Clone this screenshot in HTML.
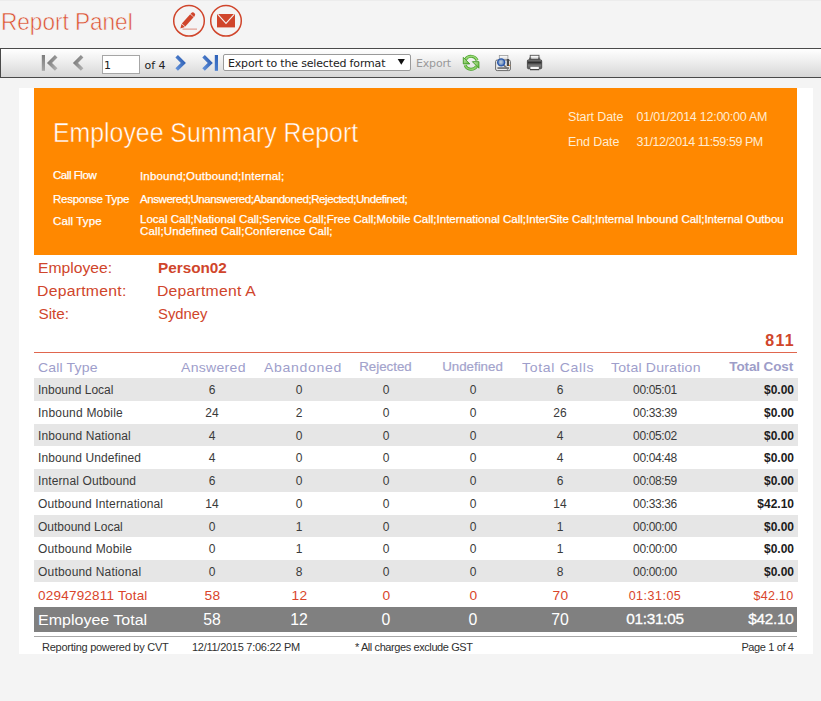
<!DOCTYPE html>
<html><head><meta charset="utf-8"><title>Report Panel</title>
<style>
html,body{margin:0;padding:0;}
body{width:821px;height:701px;background:#f4f4f4;position:relative;overflow:hidden;font-family:"Liberation Sans",sans-serif;}
.a{position:absolute;white-space:nowrap;}
#title{left:1px;top:5.6px;font-size:24px;line-height:32px;color:#dc4e2d;-webkit-text-stroke:0.6px #f4f4f4;transform:scaleX(0.94);transform-origin:0 0;}
#tb{left:0;top:48px;width:840px;height:28px;border:1px solid #4a4a4a;background:linear-gradient(#ffffff,#f0f0f0 40%,#d7d7d7);}
.dv{font-family:"DejaVu Sans","Liberation Sans",sans-serif;font-size:11px;line-height:14px;color:#222;}
#paper{left:19px;top:88px;width:794px;height:566px;background:#fff;}
#org{left:34px;top:88px;width:763px;height:167px;background:#ff8800;}
.w{color:#fff;}
.row{left:34px;width:764px;background:#e6e6e6;}
.c{text-align:center;width:87px;}
.r{text-align:right;}
.t12{font-size:12px;line-height:14px;color:#3a3a3a;}
.t12.b{color:#1c1c1c;}
.red{color:#d9452b;}
.hd{color:#9e9ecb;font-size:13px;line-height:14px;}
.sx{transform:scaleX(1.08);transform-origin:0 0;}
.b{font-weight:bold;}
.ar{font-size:13.3px;-webkit-text-stroke:0.2px #a3a3cc;color:#a3a3cc}
.emp{font-size:15.3px;line-height:18px;color:#d0452b;}
.p{font-size:11.5px;line-height:13px;color:#fff;-webkit-text-stroke:0.25px #fff;}
.sd{font-size:12.5px;line-height:15px;color:#ffecd2;}
.tot{font-size:12.5px;line-height:14px;color:#d9452b;letter-spacing:0.5px;}
.et{font-size:15px;line-height:18px;color:#fff;}
.ft{font-size:11px;line-height:13px;color:#303030;}
.en{font-size:15.8px;}
.sb{-webkit-text-stroke:0.3px #fff;font-size:15.3px;letter-spacing:-0.25px}
</style></head><body>
<div class="a" style="left:0;top:0;width:821px;height:1px;background:#ececec"></div>
<div class="a" id="title">Report Panel</div>
<svg class="a" style="left:170px;top:2px" width="76" height="38" viewBox="170 2 76 38">
 <circle cx="189" cy="20.8" r="15.3" fill="none" stroke="#d0452b" stroke-width="1.5"/>
 <circle cx="226" cy="20.8" r="15.3" fill="none" stroke="#d0452b" stroke-width="1.5"/>
 <rect x="217" y="14" width="18" height="13.4" fill="#d0452b"/>
 <path d="M217.6 14.2 L226 23.4 L234.4 14.2" fill="none" stroke="#f4f4f4" stroke-width="1.1"/>
 <g transform="translate(187.2 21.0) rotate(42)" fill="#d0452b">
  <path d="M-2.3 -7.6 L-2.3 -8.4 A2.3 2.3 0 0 1 2.3 -8.4 L2.3 -7.6 Z"/>
  <rect x="-2.3" y="-7" width="4.6" height="12.4"/>
  <path d="M-2.3 6 L2.3 6 L0 10.2 Z"/>
 </g>
 <rect x="182.5" y="28.6" width="14.5" height="1" fill="#d0452b" opacity=".6"/>
</svg>
<div class="a" id="tb"></div>
<svg class="a" style="left:38px;top:52px" width="184" height="22" viewBox="38 52 184 22">
 <defs><linearGradient id="g1" x1="0" y1="0" x2="1" y2="1"><stop offset="0" stop-color="#787878"/><stop offset="1" stop-color="#b0b0b0"/></linearGradient>
 <linearGradient id="g2" x1="1" y1="0" x2="0" y2="1"><stop offset="0" stop-color="#2a5cb2"/><stop offset="1" stop-color="#6392da"/></linearGradient>
 <linearGradient id="g3" x1="0" y1="0" x2="0" y2="1"><stop offset="0" stop-color="#7c7c7c"/><stop offset="1" stop-color="#a6a6a6"/></linearGradient>
 <linearGradient id="g4" x1="0" y1="0" x2="0" y2="1"><stop offset="0" stop-color="#2f62b8"/><stop offset="1" stop-color="#4a7ecf"/></linearGradient></defs>
 <rect x="41.8" y="55" width="3.2" height="15.8" fill="url(#g3)"/>
 <path d="M56.2 56.2 L49.5 62.9 L56.2 69.6" fill="none" stroke="url(#g1)" stroke-width="3.6"/>
 <path d="M82.15 56.2 L75.45 62.9 L82.15 69.6" fill="none" stroke="url(#g1)" stroke-width="3.6"/>
 <path d="M176.65 56.2 L183.35 62.9 L176.65 69.6" fill="none" stroke="url(#g2)" stroke-width="3.6"/>
 <path d="M203.55 56.2 L210.25 62.9 L203.55 69.6" fill="none" stroke="url(#g2)" stroke-width="3.6"/>
 <rect x="214.8" y="55" width="3.2" height="15.8" fill="url(#g4)"/>
</svg>
<div class="a dv" style="left:102px;top:55px;width:36px;height:17px;border:1px solid #a6a6a6;background:#fff;line-height:20px;text-indent:1px">1</div>
<div class="a dv" style="left:144.5px;top:59px">of 4</div>
<div class="a dv" style="left:223px;top:54px;width:186px;height:15px;border:1px solid #9a9a9a;border-radius:2px;background:#fff;line-height:17px;text-indent:4px;letter-spacing:-0.17px">Export to the selected format</div>
<svg class="a" style="left:397px;top:58px" width="9" height="8" viewBox="0 0 9 8"><path d="M0.7 1 L7.9 1 L4.3 6.8 Z" fill="#111"/></svg>
<div class="a dv" style="left:416px;top:57px;color:#999;letter-spacing:-0.17px">Export</div>
<svg class="a" style="left:460px;top:52px" width="86" height="22" viewBox="460 52 86 22">
 <defs>
  <linearGradient id="gr" x1="0" y1="0" x2="1" y2="1"><stop offset="0" stop-color="#c9eeb0"/><stop offset="1" stop-color="#5bb232"/></linearGradient>
  <linearGradient id="pb" x1="0" y1="0" x2="0" y2="1"><stop offset="0" stop-color="#9a9a9a"/><stop offset=".28" stop-color="#2c2c2c"/><stop offset=".6" stop-color="#7a7a7a"/><stop offset="1" stop-color="#565656"/></linearGradient>
  <linearGradient id="pp" x1="0" y1="0" x2="0" y2="1"><stop offset="0" stop-color="#ffffff"/><stop offset="1" stop-color="#c4c4c4"/></linearGradient>
  <radialGradient id="ln" cx=".45" cy=".45" r=".6"><stop offset="0" stop-color="#c5d0dc"/><stop offset=".55" stop-color="#7f9cc4"/><stop offset="1" stop-color="#2a58ac"/></radialGradient>
 </defs>
 <path d="M465.59 59.36 A6.5 6.5 0 0 1 477.13 60.37" fill="none" stroke="#48a22a" stroke-width="2.9"/>
 <path d="M465.59 59.36 A6.5 6.5 0 0 1 477.13 60.37" fill="none" stroke="#9ad877" stroke-width="1.5"/>
 <path d="M463.3 57.4 L463.3 63.9 L469.8 63.9 Z" fill="url(#gr)" stroke="#3d9620" stroke-width="0.9" stroke-linejoin="round"/>
 <path d="M476.61 66.24 A6.5 6.5 0 0 1 465.07 65.23" fill="none" stroke="#48a22a" stroke-width="2.9"/>
 <path d="M476.61 66.24 A6.5 6.5 0 0 1 465.07 65.23" fill="none" stroke="#8fd16b" stroke-width="1.5"/>
 <path d="M478.9 68.2 L478.9 61.7 L472.4 61.7 Z" fill="url(#gr)" stroke="#3d9620" stroke-width="0.9" stroke-linejoin="round"/>
 <rect x="499.3" y="55.4" width="8.6" height="6" fill="url(#pp)" stroke="#9a9a9a" stroke-width="0.8"/>
 <rect x="495.6" y="60" width="14.8" height="10.6" rx="1.6" fill="#ececec" stroke="#6a6a6a" stroke-width="1"/>
 <rect x="506.8" y="59" width="2.2" height="7" fill="#4a4a4a"/>
 <rect x="497.4" y="67.4" width="11.6" height="1.3" fill="#4a4a4a"/>
 <rect x="509" y="64.8" width="1.2" height="1.2" fill="#f08a1c"/>
 <path d="M504 65.4 L507.6 68.8" stroke="#777" stroke-width="1.8" stroke-linecap="round"/>
 <circle cx="501.2" cy="62.4" r="3.5" fill="url(#ln)" stroke="#2a58ac" stroke-width="1.4"/>
 <rect x="530.2" y="55.3" width="8.8" height="4.6" fill="url(#pp)" stroke="#555" stroke-width="0.9"/>
 <rect x="529" y="57.6" width="11.2" height="2.2" fill="#5a5a5a" opacity=".85"/>
 <rect x="531.2" y="56.2" width="6.8" height="2.6" fill="url(#pp)"/>
 <rect x="527.4" y="59.8" width="14.3" height="9" rx="1.2" fill="url(#pb)" stroke="#3a3a3a" stroke-width="0.8"/>
 <rect x="530.4" y="66.8" width="8.4" height="2.8" fill="#fafafa"/>
 <rect x="530" y="69.2" width="9.2" height="1" fill="#222"/>
</svg>
<div class="a" id="paper"></div>
<div class="a" id="org"></div>
<div class="a w" id="h1" style="left:52.5px;top:117px;font-size:27px;line-height:32px;-webkit-text-stroke:0.5px #ff8800;transform:scaleX(0.92);transform-origin:0 0">Employee Summary Report</div>
<div class="a sd" style="left:568px;top:110px;letter-spacing:-0.1px">Start Date</div>
<div class="a sd" style="left:636.5px;top:110px;letter-spacing:-0.25px">01/01/2014 12:00:00 AM</div>
<div class="a sd" style="left:568px;top:135px;letter-spacing:-0.1px">End Date</div>
<div class="a sd" style="left:636.5px;top:135px;letter-spacing:-0.44px">31/12/2014 11:59:59 PM</div>
<div class="a p" style="left:53px;top:169.4px;letter-spacing:-0.45px">Call Flow</div>
<div class="a p" style="left:140px;top:169.6px;letter-spacing:0.17px">Inbound;Outbound;Internal;</div>
<div class="a p" style="left:53px;top:193px;letter-spacing:-0.27px">Response Type</div>
<div class="a p" style="left:140px;top:193px;letter-spacing:-0.43px">Answered;Unanswered;Abandoned;Rejected;Undefined;</div>
<div class="a p" style="left:53px;top:215px;letter-spacing:0.1px">Call Type</div>
<div class="a p" style="left:140px;top:212.6px;width:643px;overflow:hidden">Local Call;National Call;Service Call;Free Call;Mobile Call;International Call;InterSite Call;Internal Inbound Call;Internal Outbound</div>
<div class="a p" style="left:140px;top:225px;letter-spacing:0.15px">Call;Undefined Call;Conference Call;</div>
<div class="a emp" style="left:37.5px;top:259px;transform:scaleX(1.025);transform-origin:0 0">Employee:</div>
<div class="a emp b" style="left:158px;top:259px;letter-spacing:0px">Person02</div>
<div class="a emp" style="left:37.3px;top:282px;letter-spacing:0.25px;transform:scaleX(1.03);transform-origin:0 0">Department:</div>
<div class="a emp" style="left:156.8px;top:282px;letter-spacing:0.21px;transform:scaleX(1.03);transform-origin:0 0">Department A</div>
<div class="a emp" style="left:38.5px;top:305px">Site:</div>
<div class="a emp" style="left:158px;top:305px;transform:scaleX(0.97);transform-origin:0 0">Sydney</div>
<div class="a b" style="left:735px;width:60px;text-align:right;top:332px;font-size:16px;line-height:18px;color:#d0452b;letter-spacing:1.3px">811</div>
<div class="a" style="left:34px;top:352px;width:763px;height:1px;background:#e0664e"></div>
<div class="a hd sx" style="left:37.5px;top:361px;letter-spacing:0.14px">Call Type</div>
<div class="a hd sx" style="left:181px;top:361px;letter-spacing:0.27px">Answered</div>
<div class="a" style="left:264px;top:361px;width:77.3px;height:16px;overflow:hidden"><div class="a hd sx" style="left:0;top:0;letter-spacing:0.62px">Abandoned</div></div>
<div class="a hd ar c" style="left:342.0px;top:360px;">Rejected</div>
<div class="a hd ar c" style="left:429.0px;top:360px;">Undefined</div>
<div class="a hd sx" style="left:522px;top:361px;letter-spacing:0.63px">Total Calls</div>
<div class="a hd sx" style="left:610.5px;top:361px;letter-spacing:0.2px">Total Duration</div>
<div class="a hd b r" style="left:693px;width:100px;top:360px;font-size:13.5px;letter-spacing:-0.13px;color:#9d9dc8">Total Cost</div>
<div class="a row" style="top:378px;height:23px"></div>
<div class="a t12" style="left:38px;top:383px;letter-spacing:0.00px">Inbound Local</div>
<div class="a t12 c" style="left:168.5px;top:383px">6</div>
<div class="a t12 c" style="left:255.5px;top:383px">0</div>
<div class="a t12 c" style="left:342.5px;top:383px">0</div>
<div class="a t12 c" style="left:429.5px;top:383px">0</div>
<div class="a t12 c" style="left:516.5px;top:383px">6</div>
<div class="a t12 c" style="left:605px;width:100px;top:383px;letter-spacing:-0.36px">00:05:01</div>
<div class="a t12 b r" style="left:694px;width:100px;top:383px">$0.00</div>
<div class="a t12" style="left:38px;top:406px;letter-spacing:0.21px">Inbound Mobile</div>
<div class="a t12 c" style="left:168.5px;top:406px">24</div>
<div class="a t12 c" style="left:255.5px;top:406px">2</div>
<div class="a t12 c" style="left:342.5px;top:406px">0</div>
<div class="a t12 c" style="left:429.5px;top:406px">0</div>
<div class="a t12 c" style="left:516.5px;top:406px">26</div>
<div class="a t12 c" style="left:605px;width:100px;top:406px;letter-spacing:-0.36px">00:33:39</div>
<div class="a t12 b r" style="left:694px;width:100px;top:406px">$0.00</div>
<div class="a row" style="top:424px;height:22px"></div>
<div class="a t12" style="left:38px;top:429px;letter-spacing:0.13px">Inbound National</div>
<div class="a t12 c" style="left:168.5px;top:429px">4</div>
<div class="a t12 c" style="left:255.5px;top:429px">0</div>
<div class="a t12 c" style="left:342.5px;top:429px">0</div>
<div class="a t12 c" style="left:429.5px;top:429px">0</div>
<div class="a t12 c" style="left:516.5px;top:429px">4</div>
<div class="a t12 c" style="left:605px;width:100px;top:429px;letter-spacing:-0.36px">00:05:02</div>
<div class="a t12 b r" style="left:694px;width:100px;top:429px">$0.00</div>
<div class="a t12" style="left:38px;top:451px;letter-spacing:0.09px">Inbound Undefined</div>
<div class="a t12 c" style="left:168.5px;top:451px">4</div>
<div class="a t12 c" style="left:255.5px;top:451px">0</div>
<div class="a t12 c" style="left:342.5px;top:451px">0</div>
<div class="a t12 c" style="left:429.5px;top:451px">0</div>
<div class="a t12 c" style="left:516.5px;top:451px">4</div>
<div class="a t12 c" style="left:605px;width:100px;top:451px;letter-spacing:-0.36px">00:04:48</div>
<div class="a t12 b r" style="left:694px;width:100px;top:451px">$0.00</div>
<div class="a row" style="top:469px;height:23px"></div>
<div class="a t12" style="left:38px;top:474px;letter-spacing:0.12px">Internal Outbound</div>
<div class="a t12 c" style="left:168.5px;top:474px">6</div>
<div class="a t12 c" style="left:255.5px;top:474px">0</div>
<div class="a t12 c" style="left:342.5px;top:474px">0</div>
<div class="a t12 c" style="left:429.5px;top:474px">0</div>
<div class="a t12 c" style="left:516.5px;top:474px">6</div>
<div class="a t12 c" style="left:605px;width:100px;top:474px;letter-spacing:-0.36px">00:08:59</div>
<div class="a t12 b r" style="left:694px;width:100px;top:474px">$0.00</div>
<div class="a t12" style="left:38px;top:497px;letter-spacing:0.14px">Outbound International</div>
<div class="a t12 c" style="left:168.5px;top:497px">14</div>
<div class="a t12 c" style="left:255.5px;top:497px">0</div>
<div class="a t12 c" style="left:342.5px;top:497px">0</div>
<div class="a t12 c" style="left:429.5px;top:497px">0</div>
<div class="a t12 c" style="left:516.5px;top:497px">14</div>
<div class="a t12 c" style="left:605px;width:100px;top:497px;letter-spacing:-0.36px">00:33:36</div>
<div class="a t12 b r" style="left:694px;width:100px;top:497px">$42.10</div>
<div class="a row" style="top:515px;height:22px"></div>
<div class="a t12" style="left:38px;top:520px;letter-spacing:0.00px">Outbound Local</div>
<div class="a t12 c" style="left:168.5px;top:520px">0</div>
<div class="a t12 c" style="left:255.5px;top:520px">1</div>
<div class="a t12 c" style="left:342.5px;top:520px">0</div>
<div class="a t12 c" style="left:429.5px;top:520px">0</div>
<div class="a t12 c" style="left:516.5px;top:520px">1</div>
<div class="a t12 c" style="left:605px;width:100px;top:520px;letter-spacing:-0.36px">00:00:00</div>
<div class="a t12 b r" style="left:694px;width:100px;top:520px">$0.00</div>
<div class="a t12" style="left:38px;top:542px;letter-spacing:0.18px">Outbound Mobile</div>
<div class="a t12 c" style="left:168.5px;top:542px">0</div>
<div class="a t12 c" style="left:255.5px;top:542px">1</div>
<div class="a t12 c" style="left:342.5px;top:542px">0</div>
<div class="a t12 c" style="left:429.5px;top:542px">0</div>
<div class="a t12 c" style="left:516.5px;top:542px">1</div>
<div class="a t12 c" style="left:605px;width:100px;top:542px;letter-spacing:-0.36px">00:00:00</div>
<div class="a t12 b r" style="left:694px;width:100px;top:542px">$0.00</div>
<div class="a row" style="top:560px;height:22px"></div>
<div class="a t12" style="left:38px;top:565px;letter-spacing:0.19px">Outbound National</div>
<div class="a t12 c" style="left:168.5px;top:565px">0</div>
<div class="a t12 c" style="left:255.5px;top:565px">8</div>
<div class="a t12 c" style="left:342.5px;top:565px">0</div>
<div class="a t12 c" style="left:429.5px;top:565px">0</div>
<div class="a t12 c" style="left:516.5px;top:565px">8</div>
<div class="a t12 c" style="left:605px;width:100px;top:565px;letter-spacing:-0.36px">00:00:00</div>
<div class="a t12 b r" style="left:694px;width:100px;top:565px">$0.00</div>
<div class="a tot" style="left:37.6px;top:589px;font-size:13px;letter-spacing:0.2px;transform:scaleX(1.04);transform-origin:0 0">0294792811 Total</div>
<div class="a tot c" style="left:168.9px;top:589px;font-size:13px;letter-spacing:0.3px;transform:scaleX(1.06)">58</div>
<div class="a tot c" style="left:255.9px;top:589px;font-size:13px;letter-spacing:0.3px;transform:scaleX(1.06)">12</div>
<div class="a tot c" style="left:342.9px;top:589px;font-size:13px;letter-spacing:0.3px;transform:scaleX(1.06)">0</div>
<div class="a tot c" style="left:429.9px;top:589px;font-size:13px;letter-spacing:0.3px;transform:scaleX(1.06)">0</div>
<div class="a tot c" style="left:516.9px;top:589px;font-size:13px;letter-spacing:0.3px;transform:scaleX(1.06)">70</div>
<div class="a tot c" style="left:605px;width:100px;top:589px">01:31:05</div>
<div class="a tot r" style="left:693.5px;width:100px;top:589px;letter-spacing:0.3px">$42.10</div>
<div class="a" style="left:34px;top:607px;width:763px;height:25px;background:#808080"></div>
<div class="a et" style="left:37.6px;top:611px;font-size:14.7px;transform:scaleX(1.09);transform-origin:0 0">Employee Total</div>
<div class="a et en c" style="left:168.5px;top:611px">58</div>
<div class="a et en c" style="left:255.5px;top:611px">12</div>
<div class="a et en c" style="left:342.5px;top:611px">0</div>
<div class="a et en c" style="left:429.5px;top:611px">0</div>
<div class="a et en c" style="left:516.5px;top:611px">70</div>
<div class="a et en sb c" style="left:605px;width:100px;top:610.4px">01:31:05</div>
<div class="a et en sb r" style="left:693.5px;width:100px;top:610.4px">$42.10</div>
<div class="a" style="left:34px;top:635.8px;width:763px;height:1.3px;background:#a8a8a8"></div>
<div class="a ft" style="left:42px;top:641px;letter-spacing:-0.26px">Reporting powered by CVT</div>
<div class="a ft" style="left:192px;top:641px;letter-spacing:-0.27px">12/11/2015 7:06:22 PM</div>
<div class="a ft" style="left:355px;top:641px;letter-spacing:-0.41px">* All charges exclude GST</div>
<div class="a ft r" style="left:693.5px;width:100px;top:641px;letter-spacing:-0.38px">Page 1 of 4</div>
</body></html>
